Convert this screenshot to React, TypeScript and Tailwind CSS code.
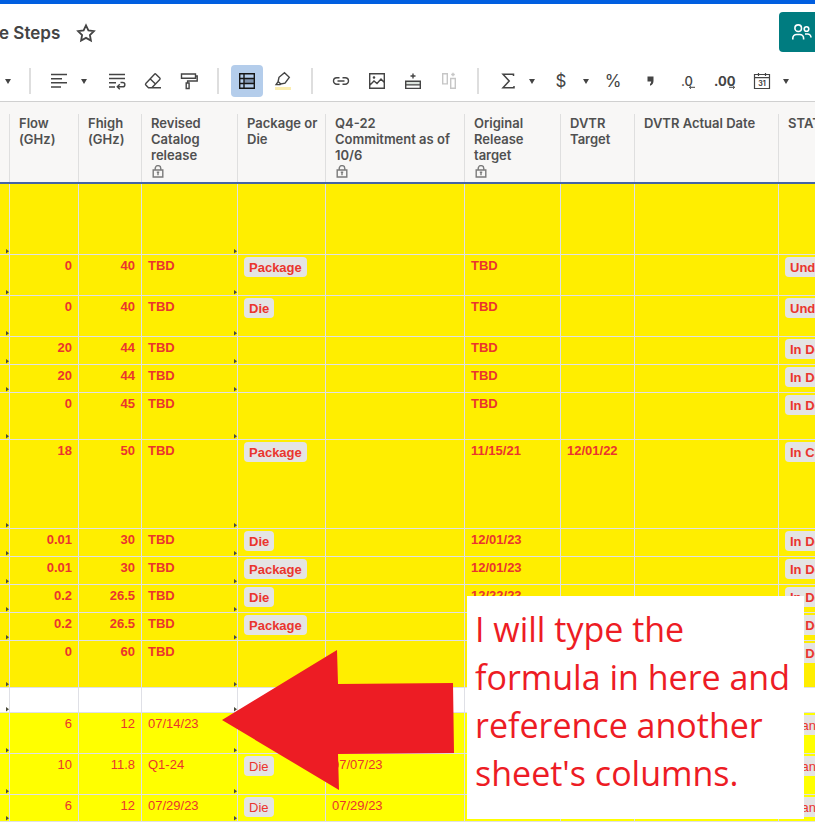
import type { ReactNode } from "react";

type Row = {
  height: string;
  tone: "gold" | "yellow" | "blank";
  flow?: string;
  fhigh?: string;
  revised?: string;
  kind?: string;
  commitment?: string;
  original?: string;
  dvtr?: string;
  status?: string;
};

const rows: Row[] = [
  { height: "h-[71px]", tone: "gold" },
  { height: "h-[41px]", tone: "gold", flow: "0", fhigh: "40", revised: "TBD", kind: "Package", original: "TBD", status: "Under Development" },
  { height: "h-[41px]", tone: "gold", flow: "0", fhigh: "40", revised: "TBD", kind: "Die", original: "TBD", status: "Under Development" },
  { height: "h-[28px]", tone: "gold", flow: "20", fhigh: "44", revised: "TBD", original: "TBD", status: "In Development" },
  { height: "h-[28px]", tone: "gold", flow: "20", fhigh: "44", revised: "TBD", original: "TBD", status: "In Development" },
  { height: "h-[47px]", tone: "gold", flow: "0", fhigh: "45", revised: "TBD", original: "TBD", status: "In Development" },
  { height: "h-[89px]", tone: "gold", flow: "18", fhigh: "50", revised: "TBD", kind: "Package", original: "11/15/21", dvtr: "12/01/22", status: "In Characterization" },
  { height: "h-[28px]", tone: "gold", flow: "0.01", fhigh: "30", revised: "TBD", kind: "Die", original: "12/01/23", status: "In Development" },
  { height: "h-[28px]", tone: "gold", flow: "0.01", fhigh: "30", revised: "TBD", kind: "Package", original: "12/01/23", status: "In Development" },
  { height: "h-[28px]", tone: "gold", flow: "0.2", fhigh: "26.5", revised: "TBD", kind: "Die", original: "12/22/23", status: "In Development" },
  { height: "h-[28px]", tone: "gold", flow: "0.2", fhigh: "26.5", revised: "TBD", kind: "Package", status: "In Development" },
  { height: "h-[47px]", tone: "gold", flow: "0", fhigh: "60", revised: "TBD", status: "In Development" },
  { height: "h-[25px]", tone: "blank" },
  { height: "h-[41px]", tone: "yellow", flow: "6", fhigh: "12", revised: "07/14/23", status: "Planning" },
  { height: "h-[41px]", tone: "yellow", flow: "10", fhigh: "11.8", revised: "Q1-24", kind: "Die", commitment: "07/07/23", status: "Planning" },
  { height: "h-[27px]", tone: "yellow", flow: "6", fhigh: "12", revised: "07/29/23", kind: "Die", commitment: "07/29/23", status: "Planning" },
];

const tones = {
  gold: "bg-[#ffee00] font-bold",
  yellow: "bg-[#ffff00]",
  blank: "bg-white",
};

const columns: { lines: string[]; width: string; locked?: boolean }[] = [
  { lines: ["Flow", "(GHz)"], width: "w-[69px]" },
  { lines: ["Fhigh", "(GHz)"], width: "w-[63px]" },
  { lines: ["Revised", "Catalog", "release"], width: "w-[96px]", locked: true },
  { lines: ["Package or", "Die"], width: "w-[88px]" },
  { lines: ["Q4-22", "Commitment as of", "10/6"], width: "w-[139px]", locked: true },
  { lines: ["Original", "Release", "target"], width: "w-[96px]", locked: true },
  { lines: ["DVTR", "Target"], width: "w-[74px]" },
  { lines: ["DVTR Actual Date"], width: "w-[144px]" },
  { lines: ["STATUS"], width: "w-auto" },
];

function Lock() {
  return (
    <svg className="mt-0.5 ml-px block" width="12" height="13" viewBox="0 0 12 13" fill="none" stroke="#7a7a7a" strokeWidth="1.4">
      <path d="M1.2 5h9.6v7H1.2zM3.2 5V3.4a2.8 2.8 0 0 1 5.6 0V5" />
      <path d="M4.8 7.3h2.4M6 7.3v3" />
    </svg>
  );
}

function Marker() {
  return (
    <svg className="absolute right-0 bottom-0" width="3" height="5" viewBox="0 0 3 5" fill="#4b4b3a">
      <path d="M0 0L3 2.3L0 4.6z" />
    </svg>
  );
}

function Chip({ children }: { children: ReactNode }) {
  return (
    <span className="mt-0.5 block h-5 w-fit rounded-[4px] bg-[#e4e4e4] px-[5px] pt-[3px] leading-4 whitespace-nowrap">
      {children}
    </span>
  );
}

function Cell({ children, right, marker, tag }: { children?: ReactNode; right?: boolean; marker?: boolean; tag?: boolean }) {
  return (
    <td
      className={`relative overflow-hidden border-b border-l border-[#dfe0e6] px-1.5 align-top leading-4 whitespace-nowrap ${
        right ? "text-right" : "text-left"
      } ${tag ? "" : "pt-[3px]"}`}
    >
      {children}
      {marker && <Marker />}
    </td>
  );
}

function Icon({ children, color = "#444444" }: { children: ReactNode; color?: string }) {
  return (
    <svg width="32" height="32" viewBox="0 0 32 32" fill="none" stroke={color} strokeWidth="1.4">
      {children}
    </svg>
  );
}

function Tool({ label, active, children }: { label: string; active?: boolean; children: ReactNode }) {
  return (
    <button
      type="button"
      aria-label={label}
      className={`flex h-8 w-8 shrink-0 items-center justify-center rounded text-[#444444] ${active ? "bg-[#b4cdeb]" : ""}`}
    >
      {children}
    </button>
  );
}

function Caret({ label }: { label: string }) {
  return (
    <button type="button" aria-label={label} className="flex h-8 w-[18px] shrink-0 items-center justify-center">
      <svg width="6" height="5" viewBox="0 0 6 5" fill="#444444">
        <path d="M0 0h6L3 5z" />
      </svg>
    </button>
  );
}

function Divider() {
  return <span className="mx-3 h-[26px] w-0.5 shrink-0 bg-[#dedede]" />;
}

function Toolbar() {
  return (
    <div className="-ml-px flex h-10 items-center overflow-hidden" role="toolbar" aria-label="Formatting">
      <Caret label="Text colour options" />
      <Divider />
      <Tool label="Align">
        <Icon><path d="M8 9.500h16M8 13.700h11M8 17.800h16M8 22h10" /></Icon>
      </Tool>
      <Caret label="Align options" />
      <div className="ml-2 flex gap-1">
        <Tool label="Wrap text">
          <Icon><path d="M8 9.500h16M8 13.500h16M8 17.800h7M8 22h6M19.500 17.500h2.200a2.100 2.100 0 0 1 0 4.300h-5M18.800 19.300L16.300 21.800L18.800 24.200" /></Icon>
        </Tool>
        <Tool label="Clear format">
          <Icon>
            <path d="M17.500 9.200a1 1 0 0 1 1.400 0l3.900 3.900a1 1 0 0 1 0 1.400l-8 8.200h-3.300l-2.700-2.700a1 1 0 0 1 0-1.400zM13 13.800l5.500 5.300M14 22.700h10" />
          </Icon>
        </Tool>
        <Tool label="Format painter">
          <Icon><path d="M8.500 9h14v4.200h-14zM22.500 11h1.700v5h-9.600v2M13.200 18h2.900v5.500h-2.900z" /></Icon>
        </Tool>
      </div>
      <Divider />
      <div className="flex gap-1">
        <Tool label="Conditional formatting" active>
          <Icon color="#161616">
            <path d="M13 13.500h10.500v5H13z" fill="#7f93ae" stroke="none" />
            <path d="M8.700 8.700h14.600v14.600H8.700zM8.700 13.500h14.600M8.700 18.500h14.600M13 8.700v14.600" />
          </Icon>
        </Tool>
        <Tool label="Highlight changes">
          <Icon>
            <path d="M8 22h16v3H8z" fill="#fceeb0" stroke="none" />
            <path d="M17.500 7.800l4.800 4.500-4.300 5.900-4.200.8-2.700-2.400.9-4.300zM11.300 16.300l-2.200 3.300h4l1.200-1.200" />
          </Icon>
        </Tool>
      </div>
      <Divider />
      <div className="flex gap-1">
        <Tool label="Insert link">
          <Icon><path d="M14.500 12.700h-2.700a3.300 3.300 0 0 0 0 6.600h2.700M17.500 12.700h2.700a3.300 3.300 0 0 1 0 6.600h-2.700M12.500 16h7" /></Icon>
        </Tool>
        <Tool label="Insert image">
          <Icon>
            <path d="M8.700 8.700h14.600v14.600H8.700zM9 20l4-4 3 2.500 4-4.500 3.300 3.500" />
            <circle cx="13" cy="12.500" r=".6" fill="#444444" />
          </Icon>
        </Tool>
        <Tool label="Insert row">
          <Icon>
            <path d="M9 16.500h14v3.500H9z" fill="#dce3dd" stroke="none" />
            <path d="M8.700 16.200h14.600v7.200H8.700zM8.700 19.900h14.600M16 8.500v5M13.500 11h5" />
          </Icon>
        </Tool>
        <Tool label="Insert column">
          <Icon color="#c6c6c6"><path d="M9.700 8.700h4.600v10.200H9.700zM17.700 13.500h4.600v9.800h-4.600zM20 7.700v3.600M18.200 9.500h3.600" /></Icon>
        </Tool>
      </div>
      <Divider />
      <div className="flex gap-1">
        <div className="flex">
          <Tool label="Sum">
            <Icon><path d="M22.500 11V9.300H12l6.200 6.700L12 22.700h11V21" strokeWidth="1.500" /></Icon>
          </Tool>
          <Caret label="Functions" />
        </div>
        <div className="flex">
          <Tool label="Currency"><span className="font-[Inter,sans-serif] text-[17px] leading-8">$</span></Tool>
          <Caret label="Currency options" />
        </div>
      </div>
      <div className="ml-0.5 flex gap-[5px]">
        <Tool label="Percent"><span className="font-[Inter,sans-serif] text-[17px] leading-8">%</span></Tool>
        <Tool label="Thousands separator">
          <Icon><path d="M13.500 11.500h6v4.500q0 3.500-3.500 4.700v-1.700q1.200-.8 1.200-2.500h-3.700z" fill="#444444" stroke="none" /></Icon>
        </Tool>
        <Tool label="Decrease decimal">
          <Icon>
            <text x="10" y="20.500" fill="#444444" stroke="none" className="font-[Inter,sans-serif] text-[13px] font-medium">.0</text>
            <path d="M18.500 22.300h5.500M20 20.800l-1.600 1.500 1.600 1.500" strokeWidth="1" />
          </Icon>
        </Tool>
        <Tool label="Increase decimal">
          <Icon>
            <text x="6" y="20.500" fill="#444444" stroke="none" className="font-[Inter,sans-serif] text-[13px] font-bold">.00</text>
            <path d="M21 22.300h5.500M25 20.800l1.600 1.500-1.600 1.500" strokeWidth="1" />
          </Icon>
        </Tool>
        <div className="flex">
          <Tool label="Date format">
            <Icon>
              <path d="M9.500 9.500h15v14h-15zM9.500 12.700h15M13.500 8v3M20.500 8v3" strokeWidth="1.200" />
              <text x="17" y="21" textAnchor="middle" fill="#444444" stroke="none" className="font-[Inter,sans-serif] text-[7px] font-bold">31</text>
            </Icon>
          </Tool>
          <Caret label="Date options" />
        </div>
      </div>
    </div>
  );
}

function TitleBar() {
  return (
    <header className="flex h-[57px] items-start justify-between pt-2">
      <div className="flex h-[42px] items-center gap-4">
        <h1 className="-ml-px font-[Inter,sans-serif] text-[17px] leading-6 font-semibold text-[#444444]">e Steps</h1>
        <button type="button" aria-label="Favourite">
          <svg width="20" height="20" viewBox="0 0 20 20" fill="none" stroke="#444444" strokeWidth="1.800">
            <path d="M10 2.300l2.400 5.100 5.500.7-4 3.900 1 5.600L10 14.900l-4.900 2.700 1-5.600-4-3.900 5.500-.7z" />
          </svg>
        </button>
      </div>
      <button type="button" aria-label="Share" className="flex h-10 w-9 items-center rounded-l bg-[#007c80] pl-3">
        <svg width="22" height="18" viewBox="0 0 22 18" fill="none" stroke="#ffffff" strokeWidth="1.600">
          <circle cx="7.200" cy="5.200" r="3.300" />
          <path d="M1.800 16.500v-1.200a3.800 3.800 0 0 1 3.800-3.800h3.200a3.800 3.800 0 0 1 3.800 3.800v1.200" />
          <circle cx="15.500" cy="6" r="2.300" />
          <path d="M14 11h2.500a3.500 3.500 0 0 1 3.500 3.500" />
        </svg>
      </button>
    </header>
  );
}

function Sheet() {
  return (
    <table className="w-full table-fixed border-separate border-spacing-0">
      <colgroup>
        <col className="w-[9px]" />
        {columns.map((c) => (
          <col key={c.lines.join(" ")} className={c.width} />
        ))}
      </colgroup>
      <thead>
        <tr className="h-[82px]">
          <th className="border-b-2 border-[#4464a5] bg-[#f8f7f6] p-0" aria-label="Row" />
          {columns.map((c) => (
            <th
              key={c.lines.join(" ")}
              scope="col"
              className="overflow-hidden border-b-2 border-[#4464a5] bg-[#f8f7f6] p-0 pt-3 text-left align-top"
            >
              <div className="h-[68px] border-l border-[#dfdfdf] pt-px pl-[9px] font-[Inter,sans-serif] text-[13px] leading-4 font-semibold whitespace-nowrap text-[#505050]">
                {c.lines.map((line) => (
                  <div key={line}>{line}</div>
                ))}
                {c.locked && <Lock />}
              </div>
            </th>
          ))}
        </tr>
      </thead>
      <tbody className="font-['Liberation_Sans',Arial,sans-serif] text-[13px] text-[#ea352e]">
        {rows.map((r, i) => (
          <tr key={i} className={`${r.height} ${tones[r.tone]}`}>
            <td className="relative border-b border-[#dfe0e6] p-0"><Marker /></td>
            <Cell right>{r.flow}</Cell>
            <Cell right>{r.fhigh}</Cell>
            <Cell marker>{r.revised}</Cell>
            <Cell tag>{r.kind && <Chip>{r.kind}</Chip>}</Cell>
            <Cell>{r.commitment}</Cell>
            <Cell>{r.original}</Cell>
            <Cell>{r.dvtr}</Cell>
            <Cell />
            <Cell tag>{r.status && <Chip>{r.status}</Chip>}</Cell>
          </tr>
        ))}
      </tbody>
    </table>
  );
}

export default function App() {
  return (
    <div className="min-h-screen overflow-hidden bg-white">
      <div className="h-1 bg-[#005ee0]" />
      <TitleBar />
      <Toolbar />
      <main className="relative border-t border-[#d0d0d0]">
        <Sheet />
        <svg className="absolute top-[548px] left-[222px]" width="232" height="140" viewBox="0 0 232 140" fill="#ed1c24">
          <path d="M0 70L115 0L116 34L231 33L232 103L116 104L117 140z" />
        </svg>
        <p className="absolute top-[494px] left-[467px] h-[223px] w-[337px] bg-white pt-[9px] pl-2 font-['Open_Sans',sans-serif] text-[34px] leading-[48px] whitespace-nowrap text-[#ed1c24]">
          I will type the
          <br />
          formula in here and
          <br />
          reference another
          <br />
          sheet's columns.
        </p>
      </main>
    </div>
  );
}
